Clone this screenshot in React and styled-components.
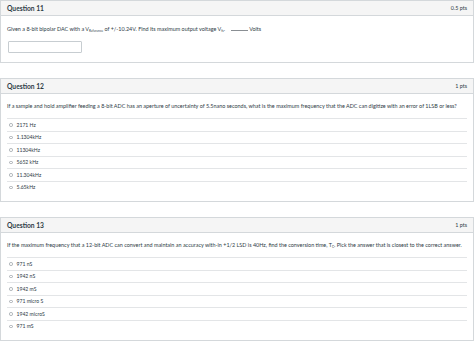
import React from 'react'
import styled, { createGlobalStyle } from "styled-components";

const GlobalStyle = createGlobalStyle`
  html, body {
    margin: 0;
    padding: 0;
    background: #fff;
    font-family: Lato, "Open Sans", sans-serif;
  }
  body {
    width: 474px;
    height: 342px;
    overflow: hidden;
  }
`;

const questions = [
  {
    title: "Question 11",
    pts: "0.5 pts",
  },
  {
    title: "Question 12",
    pts: "1 pts",
    answers: ["2171 Hz", "1.1304kHz", "11304kHz", "5652 kHz", "11.304kHz", "5.65kHz"],
  },
  {
    title: "Question 13",
    pts: "1 pts",
    answers: ["971 nS", "1942 nS", "1942 mS", "971 micro S", "1942 microS", "971 mS"],
  },
];

const App = () => {
  return (
    <Page>
      <GlobalStyle />
      {questions.map((q) => (
        <Card key={q.title}>
          <Header>
            <Title>{q.title}</Title>
            <Points>{q.pts}</Points>
          </Header>
          <Body $tall={!q.answers}>
            {q.title === "Question 11" && (
              <>
                <QuestionText>
                  Given a 8-bit bipolar DAC with a V<sub>Reference</sub> of +/-10.24V. Find its maximum output voltage V<sub>fs</sub>.
                  <Blank /> Volts
                </QuestionText>
                <AnswerInput type="text" />
              </>
            )}
            {q.title === "Question 12" && (
              <QuestionText>
                If a sample and hold amplifier feeding a 8-bit ADC has an aperture of uncertainty of 5.5nano seconds, what is the maximum frequency that the ADC can digitize with an error of 1LSB or less?
              </QuestionText>
            )}
            {q.title === "Question 13" && (
              <QuestionText>
                If the maximum frequency that a 12-bit ADC can convert and maintain an accuracy with-in +1/2 LSD is 40Hz, find the conversion time, T<sub>C</sub>. Pick the answer that is closest to the correct answer.
              </QuestionText>
            )}
            {q.answers && (
              <Answers>
                {q.answers.map((a) => (
                  <Answer key={a}>
                    <Radio />
                    <span>{a}</span>
                  </Answer>
                ))}
              </Answers>
            )}
          </Body>
        </Card>
      ))}
    </Page>
  );
};

const Page = styled.div`
  display: flex;
  flex-direction: column;
  gap: 15px;
  width: 474px;
`;

const Card = styled.div`
  border: 1px solid #d4d8db;
  background: #fff;
`;

const Header = styled.div`
  height: 14px;
  background: #f5f5f5;
  border-bottom: 1px solid #d4d8db;
  padding: 0 6px;
  display: flex;
  align-items: center;
  justify-content: space-between;
  color: #2d3b45;
`;

const Title = styled.div`
  font-size: 6.7px;
  font-weight: 700;
  line-height: 8px;
`;

const Points = styled.div`
  font-size: 5.4px;
  line-height: 8px;
  color: #2d3b45;
`;

const Body = styled.div`
  padding: ${(p) => (p.$tall ? "10px 6px 9px" : "9px 6px 8px")};
`;

const QuestionText = styled.div`
  font-size: 5.45px;
  line-height: 6px;
  color: #2d3b45;
  white-space: nowrap;
  sub {
    font-size: 3.2px;
    vertical-align: -1px;
    line-height: 0;
  }
`;

const Blank = styled.span`
  display: inline-block;
  width: 17px;
  margin-left: 6px;
  border-bottom: 1px solid #8a8f94;
  height: 4px;
`;

const AnswerInput = styled.input`
  display: block;
  box-sizing: border-box;
  margin: 9px 0 0 1px;
  width: 74px;
  height: 12px;
  border: 1px solid #c7cdd1;
  border-radius: 1px;
  padding: 0;
  background: #fff;
`;

const Answers = styled.div`
  margin-top: 9px;
  display: flex;
  flex-direction: column;
`;

const Answer = styled.div`
  display: flex;
  align-items: center;
  gap: 4px;
  flex: 0 0 12.5px;
  height: 12.5px;
  box-sizing: border-box;
  border-top: 1px solid #e3e5e7;
  padding-left: 2px;
  font-size: 5.1px;
  line-height: 6px;
  color: #2d3b45;
`;

const Radio = styled.span`
  flex: none;
  box-sizing: border-box;
  width: 3.5px;
  height: 3.5px;
  border: 0.5px solid #a7adb2;
  border-radius: 50%;
  background: #fff;
`;

export default App
